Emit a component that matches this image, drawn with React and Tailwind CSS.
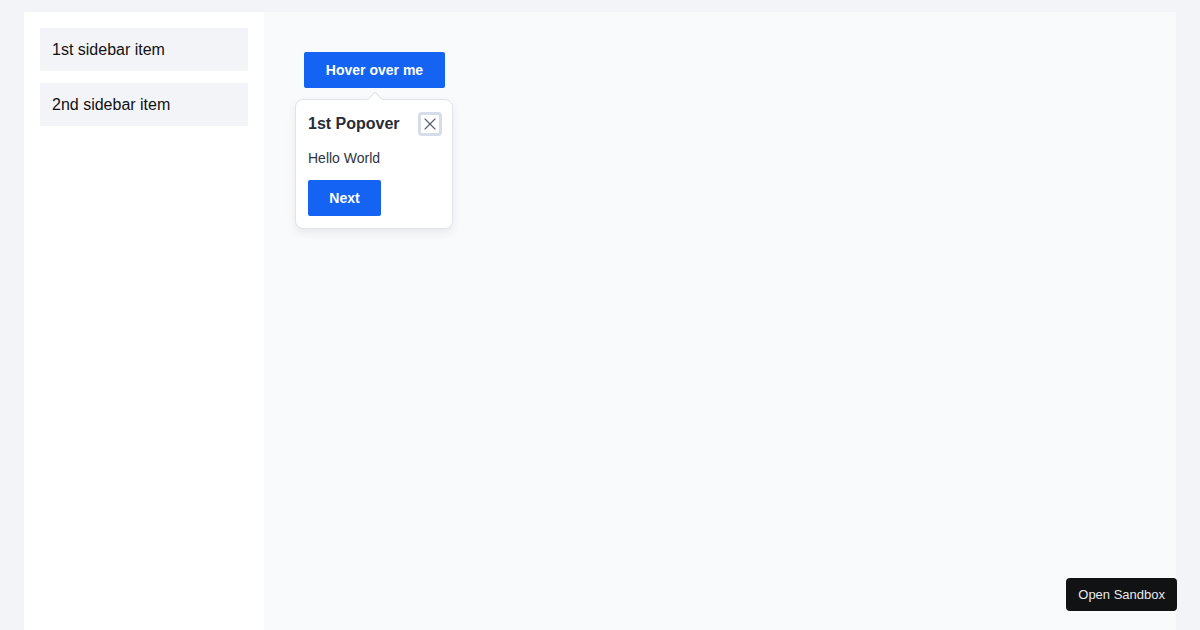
import { X } from "lucide-react";

const App = () => {
  return (
    <div
      className="min-h-screen h-[630px] bg-[#f3f4f8] px-6 pt-3 flex"
      style={{ fontFamily: '"Liberation Sans", Arial, sans-serif' }}
    >
      <aside className="w-[240px] bg-white p-4 flex flex-col gap-3">
        <div className="h-[43px] bg-[#f3f4f8] px-3 flex items-center text-base text-[#111]">
          1st sidebar item
        </div>
        <div className="h-[43px] bg-[#f3f4f8] px-3 flex items-center text-base text-[#111]">
          2nd sidebar item
        </div>
      </aside>

      <main className="flex-1 bg-[#f9fafb] pl-8 pt-10">
        <div className="relative inline-flex flex-col">
          <button className="ml-2 h-9 w-[141px] bg-[#1463f3] text-white text-sm font-bold rounded-[2px]">
            Hover over me
          </button>

          <div className="relative -ml-px mt-[11px] w-[158px] bg-white border border-[#dfe4ec] rounded-lg shadow-[0_4px_10px_rgba(30,40,60,0.08)] px-3 pt-3 pb-3">
            <div className="absolute -top-[9px] left-[71px] w-4 h-[9px] overflow-hidden">
              <div className="w-[12px] h-[12px] bg-white border border-[#dfe4ec] rotate-45 mx-auto mt-[3px]" />
            </div>
            <div className="flex items-center justify-between">
              <h3 className="text-base font-bold text-[#272c36]">1st Popover</h3>
              <button className="w-6 h-6 -mr-[2px] flex items-center justify-center rounded-[4px] ring-[3px] ring-inset ring-[#d6dde8] text-[#5a606b]">
                <X size={20} strokeWidth={1.4} />
              </button>
            </div>
            <p className="mt-3 text-sm text-[#2f3440]">Hello World</p>
            <button className="mt-3 h-9 w-[73px] bg-[#1463f3] text-white text-sm font-bold rounded-[2px]">
              Next
            </button>
          </div>
        </div>
      </main>

      <button className="fixed right-[23px] bottom-[19px] h-[33px] px-3 bg-[#111214] text-[#e8e8ea] text-[13px] rounded">
        Open Sandbox
      </button>
    </div>
  );
};

export default App;
